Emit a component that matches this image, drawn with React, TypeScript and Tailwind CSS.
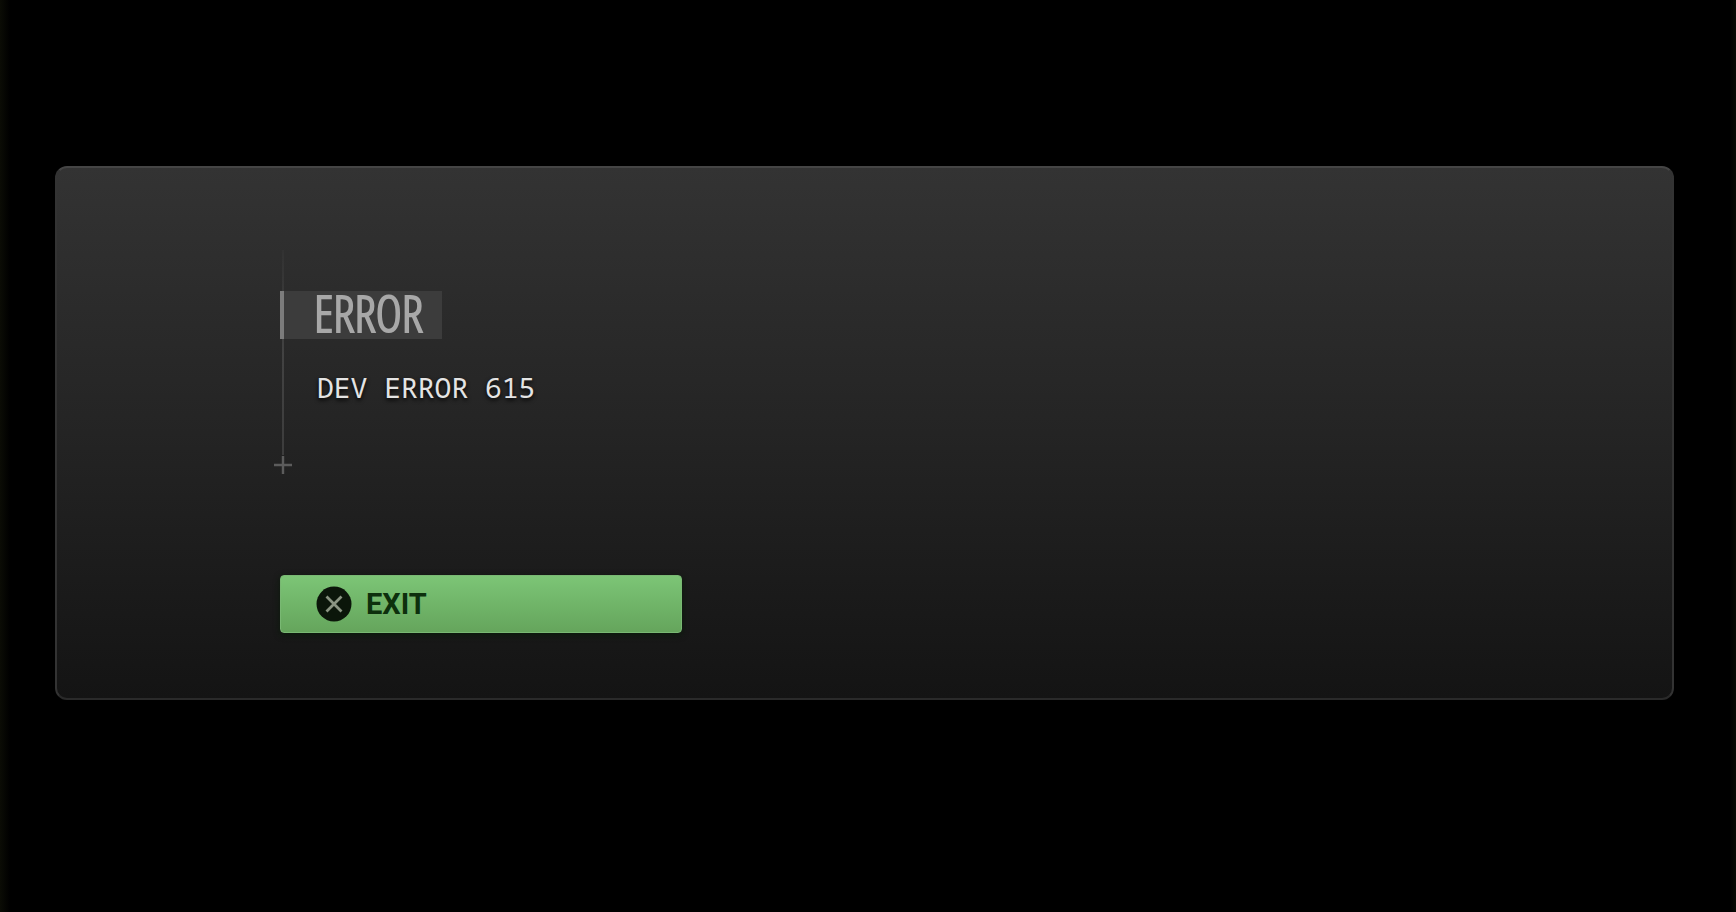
function CrossButtonIcon() {
  return (
    <svg viewBox="0 0 36 36" className="size-9 shrink-0" aria-hidden="true">
      <circle cx="18" cy="18" r="17.5" fill="#0b160a" />
      <path d="M10.5 10.5 25.5 25.5M25.5 10.5 10.5 25.5" stroke="#8a9482" strokeWidth="2.8" fill="none" />
    </svg>
  );
}

function Rule() {
  return (
    <div className="flex w-5 flex-col items-center" aria-hidden="true">
      <span className="w-0.5 grow bg-linear-to-b from-white/2 via-white/12 to-white/12" />
      <svg viewBox="0 0 20 20" className="size-5 shrink-0">
        <path d="M10 1V19M1 10H19" stroke="#5c5c5c" strokeWidth="2.4" />
      </svg>
    </div>
  );
}

export default function App() {
  return (
    <main className="min-h-screen bg-black bg-[linear-gradient(to_right,#0b0c05,#000_10px,#000_calc(100%-6px),#080903)] pt-[166px] pr-[62px] pb-16 pl-[55px]">
      <section
        role="alertdialog"
        aria-labelledby="dialog-title"
        aria-describedby="dialog-message"
        className="rounded-xl border-2 border-t-[#454545] border-x-[#333333] border-b-[#2a2a2a] bg-linear-to-b from-[#333333] via-[#242424] to-[#141414] pt-[82px] pr-16 pb-[65px] pl-[216px]"
      >
        <div className="flex">
          <Rule />
          <div className="flex flex-col items-start pt-[41px] pb-[72px]">
            <h1
              id="dialog-title"
              className="relative -ml-[13px] h-12 border-l-4 border-[#7c7c7c] bg-[#3c3c3c] pr-[19px] pl-[30px] font-['Open_Sans_Condensed_Light','Open_Sans_Condensed','Roboto_Condensed',sans-serif] text-[50px] leading-[45px] font-normal text-[#a8a8a8] [-webkit-text-stroke:2px_#a8a8a8]"
            >
              ERROR
            </h1>
            <p
              id="dialog-message"
              className="mt-8 ml-6 font-['Noto_Sans_Mono','DejaVu_Sans_Mono',monospace] text-[28px] leading-8 text-[#e4e4e4] [text-shadow:0_2px_4px_#000000]"
            >
              DEV ERROR 615
            </p>
          </div>
        </div>
        <button
          type="button"
          className="mt-[100px] ml-[7px] flex h-[58px] w-full max-w-[402px] items-center gap-[14px] rounded-sm border border-[#79b873] bg-linear-to-b from-[#7cc576] to-[#65a55c] pl-[35px] text-left font-['Roboto','Noto_Sans',sans-serif] text-[29px] leading-8 font-bold text-[#0d300d] shadow-[0_2px_6px_#0a1a0a]"
        >
          <CrossButtonIcon />
          EXIT
        </button>
      </section>
    </main>
  );
}
